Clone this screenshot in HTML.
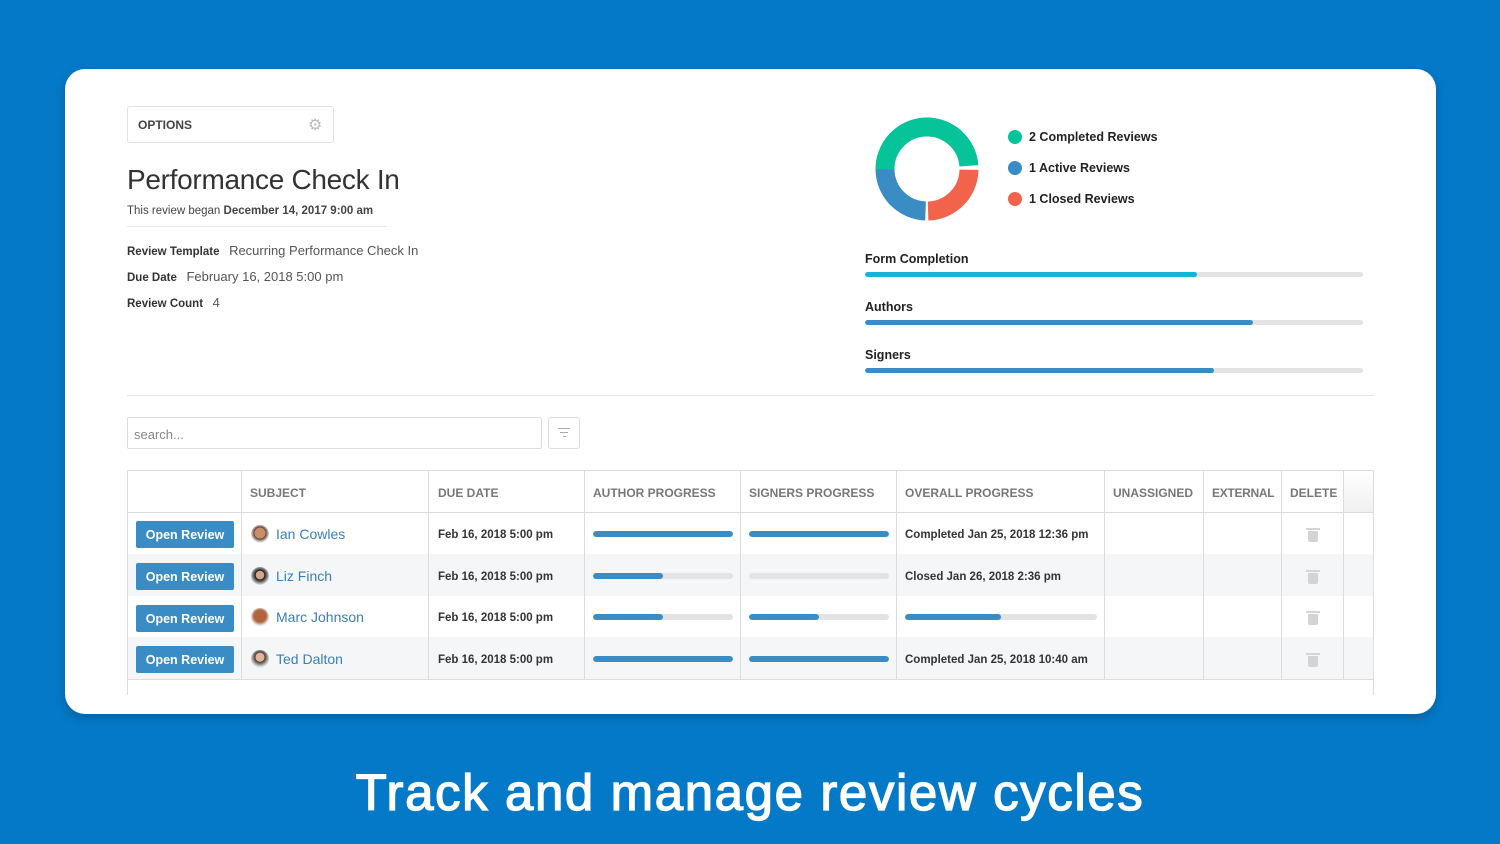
<!DOCTYPE html>
<html><head><meta charset="utf-8"><style>
*{margin:0;padding:0;box-sizing:border-box}
body{width:1500px;height:844px;background:#0479c7;font-family:"Liberation Sans",sans-serif;position:relative;overflow:hidden;color:#333}
.card{position:absolute;left:65px;top:69px;width:1371px;height:645px;background:#fff;border-radius:20px;overflow:hidden;box-shadow:0 4px 10px rgba(0,0,0,.2)}
.a{position:absolute}
.cap{position:absolute;left:0;width:1500px;top:763px;text-align:center;color:#fff;font-size:51px;font-weight:normal;letter-spacing:1.6px;-webkit-text-stroke:1.3px #fff}
.bar{position:absolute;height:6px;border-radius:3px;background:#e3e3e3;overflow:hidden}
.bar i{display:block;height:100%;background:#3a8cc4;border-radius:3px}
.lbl{position:absolute;font-size:12.5px;font-weight:bold;color:#222}
.vl{position:absolute;width:1px;background:#dcdcdc}
.hl{position:absolute;height:1px;background:#dcdcdc}
.th{position:absolute;top:486px;font-size:12px;font-weight:bold;color:#777}
.btn{position:absolute;left:136px;width:98px;height:27px;background:#3a8cc4;border-radius:2px;color:#fff;font-size:12.5px;font-weight:bold;text-align:center;line-height:28px}
.nm{position:absolute;left:276px;font-size:14px;color:#3a7fb8}
.av{position:absolute;left:251px;width:18px;height:18px;border-radius:50%}
.dd{position:absolute;left:438px;font-size:11.5px;font-weight:bold;color:#333}
.ov{position:absolute;left:905px;font-size:11.5px;font-weight:bold;color:#333}
.tr{position:absolute;left:1308px;width:10px;height:11px;background:#d4d4d4;border-radius:0 0 2px 2px}
.tr:before{content:"";position:absolute;left:-2px;top:-3px;width:14px;height:2px;background:#d4d4d4}
</style></head><body>
<div class="card"></div>
<div class="a" style="left:127px;top:106px;width:207px;height:37px;border:1px solid #e2e2e2;border-radius:3px"></div>
<div class="a" style="left:138px;top:118px;font-size:12px;font-weight:bold;color:#444">OPTIONS</div>
<div class="a" style="left:308px;top:115px;font-size:16px;color:#bbb">⚙</div>
<div class="a" style="left:127px;top:164px;font-size:28px;color:#333;font-weight:300;letter-spacing:-0.3px">Performance Check In</div>
<div class="a" style="left:127px;top:205px;font-size:11.5px;color:#444">This review began <b>December 14, 2017 9:00 am</b></div>
<div class="hl" style="left:127px;top:226px;width:260px;background:#e8e8e8"></div>
<div class="a" style="left:127px;top:243px;font-size:11.5px;color:#555"><b style="color:#333">Review Template</b>&nbsp;&nbsp; <span style="font-size:13px">Recurring Performance Check In</span></div>
<div class="a" style="left:127px;top:269px;font-size:11.5px;color:#555"><b style="color:#333">Due Date</b>&nbsp;&nbsp; <span style="font-size:13px">February 16, 2018 5:00 pm</span></div>
<div class="a" style="left:127px;top:295px;font-size:11.5px;color:#555"><b style="color:#333">Review Count</b>&nbsp;&nbsp; <span style="font-size:13px">4</span></div>
<svg class="a" style="left:870px;top:112px" width="114" height="114" viewBox="0 0 114 114">
<g transform="rotate(180 57 57)" fill="none" stroke-width="19">
<circle cx="57" cy="57" r="42" stroke="#06c39a" stroke-dasharray="130 134" transform="rotate(-2 57 57)"/>
<circle cx="57" cy="57" r="42" stroke="#f2634c" stroke-dasharray="64 200" transform="rotate(181 57 57)"/>
<circle cx="57" cy="57" r="42" stroke="#3a8cc4" stroke-dasharray="64 200" transform="rotate(272 57 57)"/>
</g></svg>
<div class="a" style="left:1008px;top:130px;width:14px;height:14px;border-radius:50%;background:#06c39a"></div>
<div class="a" style="left:1008px;top:161px;width:14px;height:14px;border-radius:50%;background:#3a8cc4"></div>
<div class="a" style="left:1008px;top:192px;width:14px;height:14px;border-radius:50%;background:#f2634c"></div>
<div class="lbl" style="left:1029px;top:130px">2 Completed Reviews</div>
<div class="lbl" style="left:1029px;top:161px">1 Active Reviews</div>
<div class="lbl" style="left:1029px;top:192px">1 Closed Reviews</div>
<div class="lbl" style="left:865px;top:252px">Form Completion</div>
<div class="bar" style="left:865px;top:272px;width:498px;height:5px"><i style="width:332px;background:#12b5d4"></i></div>
<div class="lbl" style="left:865px;top:300px">Authors</div>
<div class="bar" style="left:865px;top:320px;width:498px;height:5px"><i style="width:388px"></i></div>
<div class="lbl" style="left:865px;top:348px">Signers</div>
<div class="bar" style="left:865px;top:368px;width:498px;height:5px"><i style="width:349px"></i></div>
<div class="hl" style="left:127px;top:395px;width:1247px;background:#e4e4e4"></div>
<div class="a" style="left:127px;top:417px;width:415px;height:32px;border:1px solid #ddd;border-radius:2px;padding:9px 6px;font-size:13px;color:#888">search...</div>
<div class="a" style="left:548px;top:417px;width:32px;height:32px;border:1px solid #ddd;border-radius:3px"></div>
<div class="a" style="left:558px;top:428px;width:12px;height:1px;background:#aaa"></div>
<div class="a" style="left:560px;top:432px;width:8px;height:1px;background:#aaa"></div>
<div class="a" style="left:563px;top:436px;width:3px;height:1px;background:#aaa"></div>
<div class="a" style="left:127px;top:554px;width:1247px;height:42px;background:#f5f6f8"></div>
<div class="a" style="left:127px;top:637px;width:1247px;height:42px;background:#f5f6f8"></div>
<div class="a" style="left:1343px;top:471px;width:31px;height:41px;background:linear-gradient(#fff,#f0f0f0)"></div>
<div class="hl" style="left:127px;top:470px;width:1247px"></div>
<div class="hl" style="left:127px;top:512px;width:1247px"></div>
<div class="hl" style="left:127px;top:679px;width:1247px"></div>
<div class="vl" style="left:127px;top:470px;height:225px"></div>
<div class="vl" style="left:1373px;top:470px;height:225px"></div>
<div class="vl" style="left:241px;top:470px;height:209px"></div>
<div class="vl" style="left:428px;top:470px;height:209px"></div>
<div class="vl" style="left:584px;top:470px;height:209px"></div>
<div class="vl" style="left:740px;top:470px;height:209px"></div>
<div class="vl" style="left:896px;top:470px;height:209px"></div>
<div class="vl" style="left:1104px;top:470px;height:209px"></div>
<div class="vl" style="left:1203px;top:470px;height:209px"></div>
<div class="vl" style="left:1281px;top:470px;height:209px"></div>
<div class="vl" style="left:1343px;top:470px;height:209px"></div>
<div class="th" style="left:250px">SUBJECT</div>
<div class="th" style="left:438px">DUE DATE</div>
<div class="th" style="left:593px">AUTHOR PROGRESS</div>
<div class="th" style="left:749px">SIGNERS PROGRESS</div>
<div class="th" style="left:905px">OVERALL PROGRESS</div>
<div class="th" style="left:1113px">UNASSIGNED</div>
<div class="th" style="left:1212px;letter-spacing:-0.3px">EXTERNAL</div>
<div class="th" style="left:1290px">DELETE</div>
<div class="btn" style="top:521px">Open Review</div>
<div class="btn" style="top:563px">Open Review</div>
<div class="btn" style="top:605px">Open Review</div>
<div class="btn" style="top:646px">Open Review</div>
<div class="av" style="top:525px;background:radial-gradient(circle at 50% 45%,#c98e6a 40%,#5a4030 42%,#eee 70%)"></div>
<div class="av" style="top:567px;background:radial-gradient(circle at 50% 45%,#d9a58a 30%,#1a1a1a 34%,#eee 75%)"></div>
<div class="av" style="top:608px;background:radial-gradient(circle at 50% 45%,#b0653f 45%,#eee 70%)"></div>
<div class="av" style="top:650px;background:radial-gradient(circle at 50% 40%,#e0b59a 30%,#4a3a30 34%,#bbb 60%,#eee 72%)"></div>
<div class="nm" style="top:526px">Ian Cowles</div>
<div class="nm" style="top:568px">Liz Finch</div>
<div class="nm" style="top:609px">Marc Johnson</div>
<div class="nm" style="top:651px">Ted Dalton</div>
<div class="dd" style="top:529px">Feb 16, 2018 5:00 pm</div>
<div class="dd" style="top:571px">Feb 16, 2018 5:00 pm</div>
<div class="dd" style="top:612px">Feb 16, 2018 5:00 pm</div>
<div class="dd" style="top:654px">Feb 16, 2018 5:00 pm</div>
<div class="bar" style="left:593px;top:531px;width:140px"><i style="width:100%"></i></div>
<div class="bar" style="left:749px;top:531px;width:140px"><i style="width:100%"></i></div>
<div class="bar" style="left:593px;top:573px;width:140px"><i style="width:70px"></i></div>
<div class="bar" style="left:749px;top:573px;width:140px"><i style="width:0"></i></div>
<div class="bar" style="left:593px;top:614px;width:140px"><i style="width:70px"></i></div>
<div class="bar" style="left:749px;top:614px;width:140px"><i style="width:70px"></i></div>
<div class="bar" style="left:905px;top:614px;width:192px"><i style="width:96px"></i></div>
<div class="bar" style="left:593px;top:656px;width:140px"><i style="width:100%"></i></div>
<div class="bar" style="left:749px;top:656px;width:140px"><i style="width:100%"></i></div>
<div class="ov" style="top:529px">Completed Jan 25, 2018 12:36 pm</div>
<div class="ov" style="top:571px">Closed Jan 26, 2018 2:36 pm</div>
<div class="ov" style="top:654px">Completed Jan 25, 2018 10:40 am</div>
<div class="tr" style="top:531px"></div>
<div class="tr" style="top:573px"></div>
<div class="tr" style="top:614px"></div>
<div class="tr" style="top:656px"></div>
<div class="cap">Track and manage review cycles</div>
</body></html>
